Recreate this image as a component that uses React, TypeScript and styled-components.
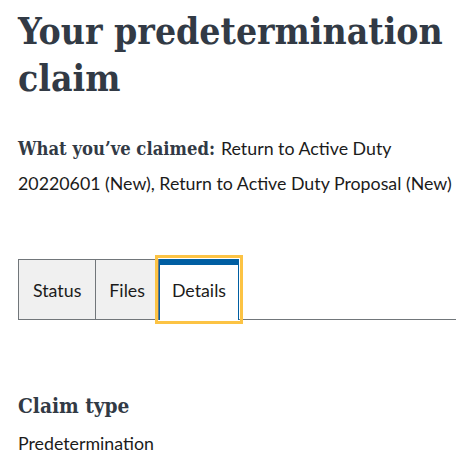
import React from "react";
import styled, { createGlobalStyle } from "styled-components";

const GlobalStyle = createGlobalStyle`
  body {
    margin: 0;
    background: #ffffff;
    color: #1b1b1b;
    font-family: Lato, "Liberation Sans", sans-serif;
  }
`;

const serif = `
  font-family: "DejaVu Serif Condensed", "DejaVu Serif", serif;
  font-stretch: condensed;
  font-weight: 700;
  color: #323a45;
`;

const Page = styled.main`
  padding: 0 18px;
`;

const Title = styled.h1`
  ${serif}
  margin: 8px 0 0;
  font-size: 37px;
  line-height: 47px;
`;

const Claimed = styled.p`
  margin: 29px 0 0;
  font-size: 17.8px;
  line-height: 35px;

  strong {
    ${serif}
    font-size: 18.3px;
    margin-right: 6px;
  }
`;

const TabList = styled.ul`
  display: flex;
  margin: 58px 0 0;
  padding: 0;
  list-style: none;
  border-bottom: 1px solid #71767a;
  height: 60px;
`;

const Tab = styled.li<{ $active?: boolean; $first?: boolean }>`
  display: flex;
  align-items: center;
  box-sizing: border-box;
  padding: 0 13px;
  font-size: 17.8px;
  color: #1b1b1b;
  background: ${(p) => (p.$active ? "#ffffff" : "#f0f0f0")};
  border: 1px solid #71767a;
  border-bottom: none;
  border-left: ${(p) => (p.$first ? "1px solid #71767a" : "none")};
  height: 60px;

  &:first-child {
    padding: 0 14px;
  }

  ${(p) =>
    p.$active &&
    `
    height: 61px;
    margin-bottom: -1px;
    padding: 0 12px 6px;
    border: 1px solid #005ea2;
    border-top: 6px solid #005ea2;
    border-bottom: none;
    outline: 3px solid #fcc344;
    outline-offset: 1px;
  `}
`;

const Section = styled.section`
  margin-top: 72px;
`;

const SectionHeading = styled.h2`
  ${serif}
  margin: 0;
  font-size: 20.7px;
  line-height: 28px;
`;

const SectionText = styled.p`
  margin: 9px 0 0;
  font-size: 17.8px;
  line-height: 28px;
`;

export default function App() {
  return (
    <Page>
      <GlobalStyle />
      <Title>Your predetermination claim</Title>
      <Claimed>
        <strong>What you’ve claimed:</strong>
        Return to Active Duty 20220601 (New), Return to Active Duty Proposal
        (New)
      </Claimed>
      <TabList>
        <Tab $first>Status</Tab>
        <Tab>Files</Tab>
        <Tab $active>Details</Tab>
      </TabList>
      <Section>
        <SectionHeading>Claim type</SectionHeading>
        <SectionText>Predetermination</SectionText>
      </Section>
    </Page>
  );
}
